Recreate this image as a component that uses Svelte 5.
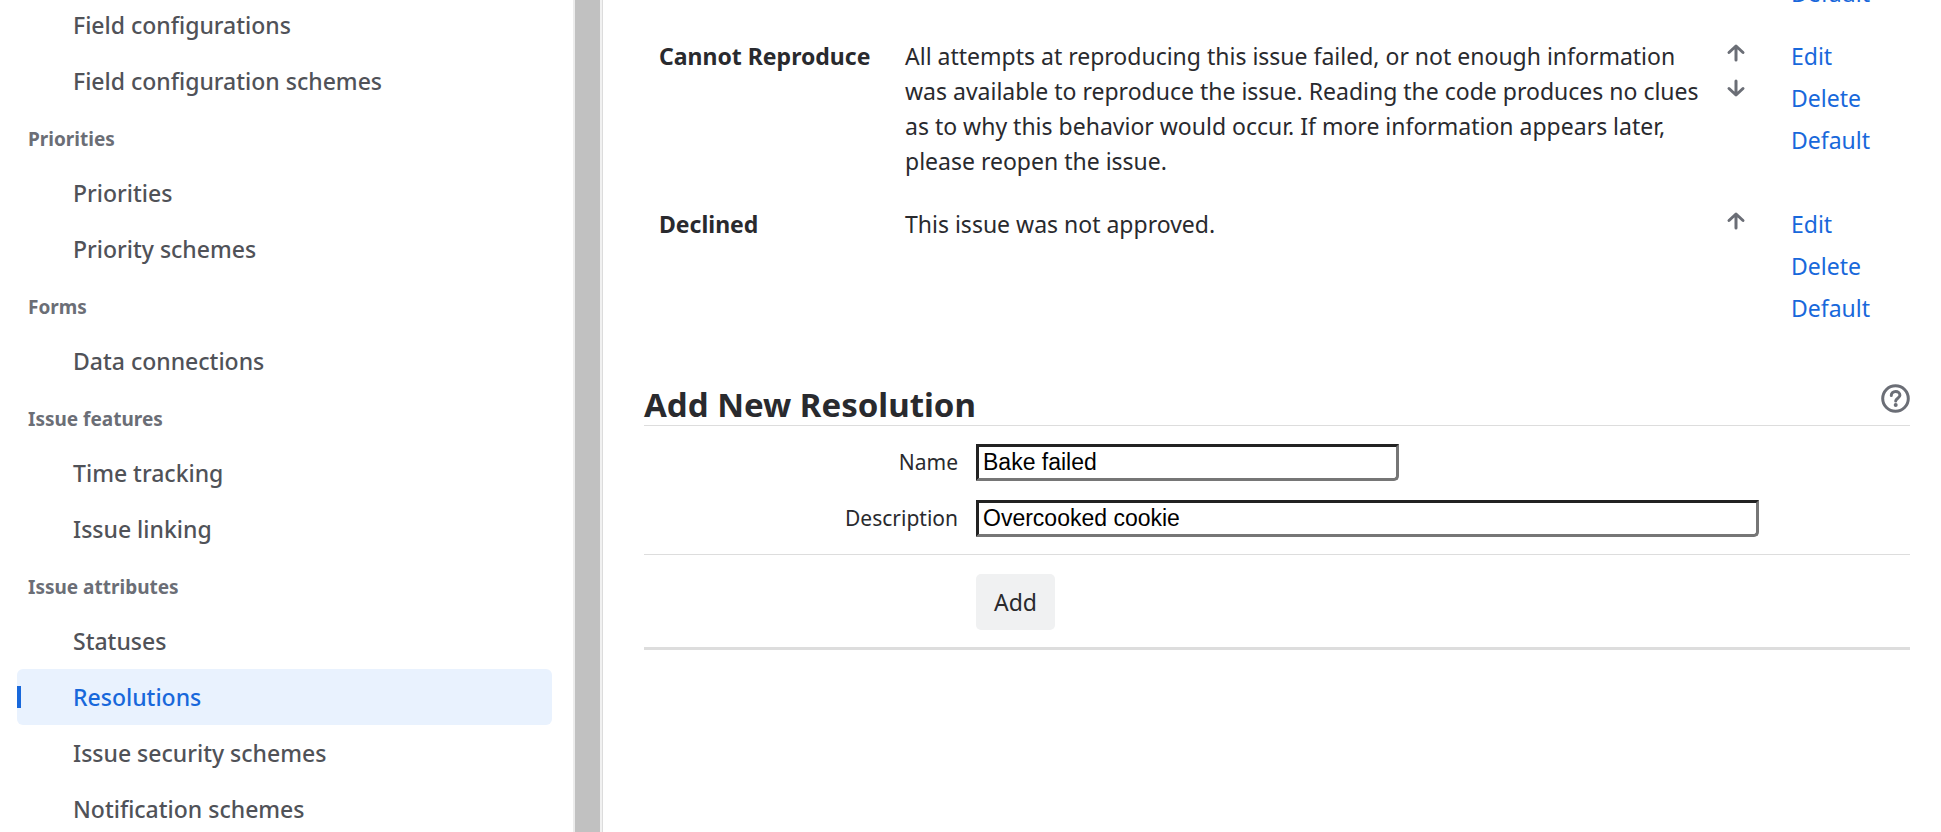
<script>
  const navigation = [
    { title: '', items: ['Field configurations', 'Field configuration schemes'] },
    { title: 'Priorities', items: ['Priorities', 'Priority schemes'] },
    { title: 'Forms', items: ['Data connections'] },
    { title: 'Issue features', items: ['Time tracking', 'Issue linking'] },
    {
      title: 'Issue attributes',
      items: ['Statuses', 'Resolutions', 'Issue security schemes', 'Notification schemes'],
    },
  ];

  const resolutions = [
    { name: '', description: '', order: [], actions: ['Default'] },
    {
      name: 'Cannot Reproduce',
      description:
        'All attempts at reproducing this issue failed, or not enough information was available to reproduce the issue. Reading the code produces no clues as to why this behavior would occur. If more information appears later, please reopen the issue.',
      order: ['up', 'down'],
      actions: ['Edit', 'Delete', 'Default'],
    },
    {
      name: 'Declined',
      description: 'This issue was not approved.',
      order: ['up'],
      actions: ['Edit', 'Delete', 'Default'],
    },
  ];

  const arrows = {
    up: 'M11 18V4.5M4 10.5L11 4L18 10.5',
    down: 'M11 4V17.5M4 11.5L11 18L18 11.5',
  };

  let current = $state('Resolutions');
  let name = $state('Bake failed');
  let description = $state('Overcooked cookie');
</script>

<div class="page">
  <nav class="sidebar">
    {#each navigation as group}
      {#if group.title}
        <h3>{group.title}</h3>
      {/if}
      <ul>
        {#each group.items as item}
          <li>
            <a href="#top" class:selected={item === current} onclick={() => (current = item)}>{item}</a>
          </li>
        {/each}
      </ul>
    {/each}
  </nav>

  <div class="scrollbar"></div>

  <main>
    <table>
      <tbody>
        {#each resolutions as row}
          <tr>
            <td class="name">{row.name}</td>
            <td class="description">{row.description}</td>
            <td class="order">
              {#each row.order as direction}
                <a href="#top" aria-label="Move {direction}">
                  <svg width="22" height="22" viewBox="0 0 22 22"><path d={arrows[direction]} /></svg>
                </a>
              {/each}
            </td>
            <td class="actions">
              <ul>
                {#each row.actions as action}
                  <li><a href="#top">{action}</a></li>
                {/each}
              </ul>
            </td>
          </tr>
        {/each}
      </tbody>
    </table>

    <form onsubmit={(e) => e.preventDefault()}>
      <header>
        <h2>Add New Resolution</h2>
        <a class="help" href="#top" aria-label="Help">
          <svg width="29" height="29" viewBox="0 0 29 29">
            <circle cx="14.5" cy="14.5" r="12.8" />
            <path d="M10.3 11.6C10.3 9.1 12.1 7.5 14.6 7.5C17.1 7.5 18.9 9.1 18.9 11.3C18.9 14.2 14.7 14.3 14.7 17.1" />
            <circle class="dot" cx="14.7" cy="21" r="2" />
          </svg>
        </a>
      </header>
      <div class="fields">
        <div class="field">
          <label for="name">Name</label>
          <input id="name" class="medium" type="text" bind:value={name} />
        </div>
        <div class="field">
          <label for="description">Description</label>
          <input id="description" class="long" type="text" bind:value={description} />
        </div>
      </div>
      <div class="buttons">
        <button type="submit">Add</button>
      </div>
    </form>
  </main>
</div>

<style>
  :global(body) {
    margin: 0;
    background: #fff;
  }

  .page {
    display: flex;
    height: 100vh;
    overflow: hidden;
    font-family: 'Segoe UI', 'Noto Sans', sans-serif;
    font-size: 23px;
    line-height: 35px;
    color: #292a2e;
  }

  a {
    color: #1868db;
    text-decoration: none;
  }

  ul {
    list-style: none;
    margin: 0;
    padding: 0;
  }

  .sidebar {
    box-sizing: border-box;
    flex: 0 0 573px;
    margin-top: -3px;
    padding: 0 21px 0 17px;
  }

  .sidebar h3 {
    margin: 0;
    padding: 4px 0 0 11px;
    font-size: 19px;
    font-weight: 700;
    line-height: 52px;
    color: #6b6e76;
  }

  .sidebar a {
    display: flex;
    align-items: center;
    height: 56px;
    padding-left: 56px;
    border-radius: 6px;
    font-weight: 500;
    color: #505258;
  }

  .sidebar a.selected {
    padding-left: 0;
    background: #e9f2fe;
    color: #1868db;
  }

  .sidebar a.selected::before {
    content: '';
    width: 4px;
    height: 22px;
    margin-right: 52px;
    background: #1868db;
  }

  .scrollbar {
    flex: 0 0 25px;
    background: #c1c1c1;
    border-left: 2px solid #ececec;
    border-right: 2px solid #f1f1f1;
  }

  main {
    flex: 1;
    min-width: 0;
    margin-top: -38px;
    padding: 0 31px 0 41px;
    border-left: 1px solid #dcdcdc;
  }

  table {
    width: 100%;
    border-collapse: collapse;
  }

  td {
    padding: 14px 15px;
    vertical-align: top;
  }

  .name {
    width: 216px;
    font-weight: 700;
    white-space: nowrap;
  }

  .description {
    padding-right: 3px;
  }

  .order {
    width: 36px;
  }

  .order a {
    display: block;
    height: 32px;
    padding-top: 3px;
  }

  .actions {
    width: 104px;
  }

  .actions li + li {
    margin-top: 7px;
  }

  svg {
    display: block;
    fill: none;
    stroke: #6b6e76;
    stroke-width: 3;
    stroke-linecap: round;
    stroke-linejoin: round;
  }

  .dot {
    fill: #6b6e76;
    stroke: none;
  }

  form {
    margin-top: 36px;
    border-bottom: 3px solid #ddd;
  }

  header {
    display: flex;
    justify-content: space-between;
    border-bottom: 1px solid #ddd;
  }

  h2 {
    margin: 0;
    padding-top: 2px;
    font-size: 33px;
    font-weight: 700;
    line-height: 47px;
  }

  h2,
  .help {
    padding-top: 8px;
  }

  h2 {
    line-height: 41px;
  }

  .fields {
    display: flex;
    flex-direction: column;
    gap: 19px;
    padding: 18px 0 17px;
    border-bottom: 1px solid #ddd;
  }

  .field {
    display: flex;
    align-items: center;
    gap: 18px;
  }

  label {
    flex: 0 0 314px;
    text-align: right;
    font-size: 21px;
  }

  input {
    box-sizing: border-box;
    height: 37px;
    padding: 0 4px;
    border: 3px solid;
    border-color: #222 #767676 #767676 #222;
    border-radius: 0 0 5px 0;
    background: #fff;
    color: #000;
    font-family: Arial, 'Liberation Sans', sans-serif;
    font-size: 23px;
  }

  .medium {
    width: 423px;
  }

  .long {
    width: 783px;
  }

  .buttons {
    padding: 19px 0 17px 332px;
  }

  button {
    display: block;
    height: 56px;
    padding: 0 18px;
    border: 0;
    border-radius: 5px;
    background: #f0f1f2;
    color: #292a2e;
    font: inherit;
  }
</style>
